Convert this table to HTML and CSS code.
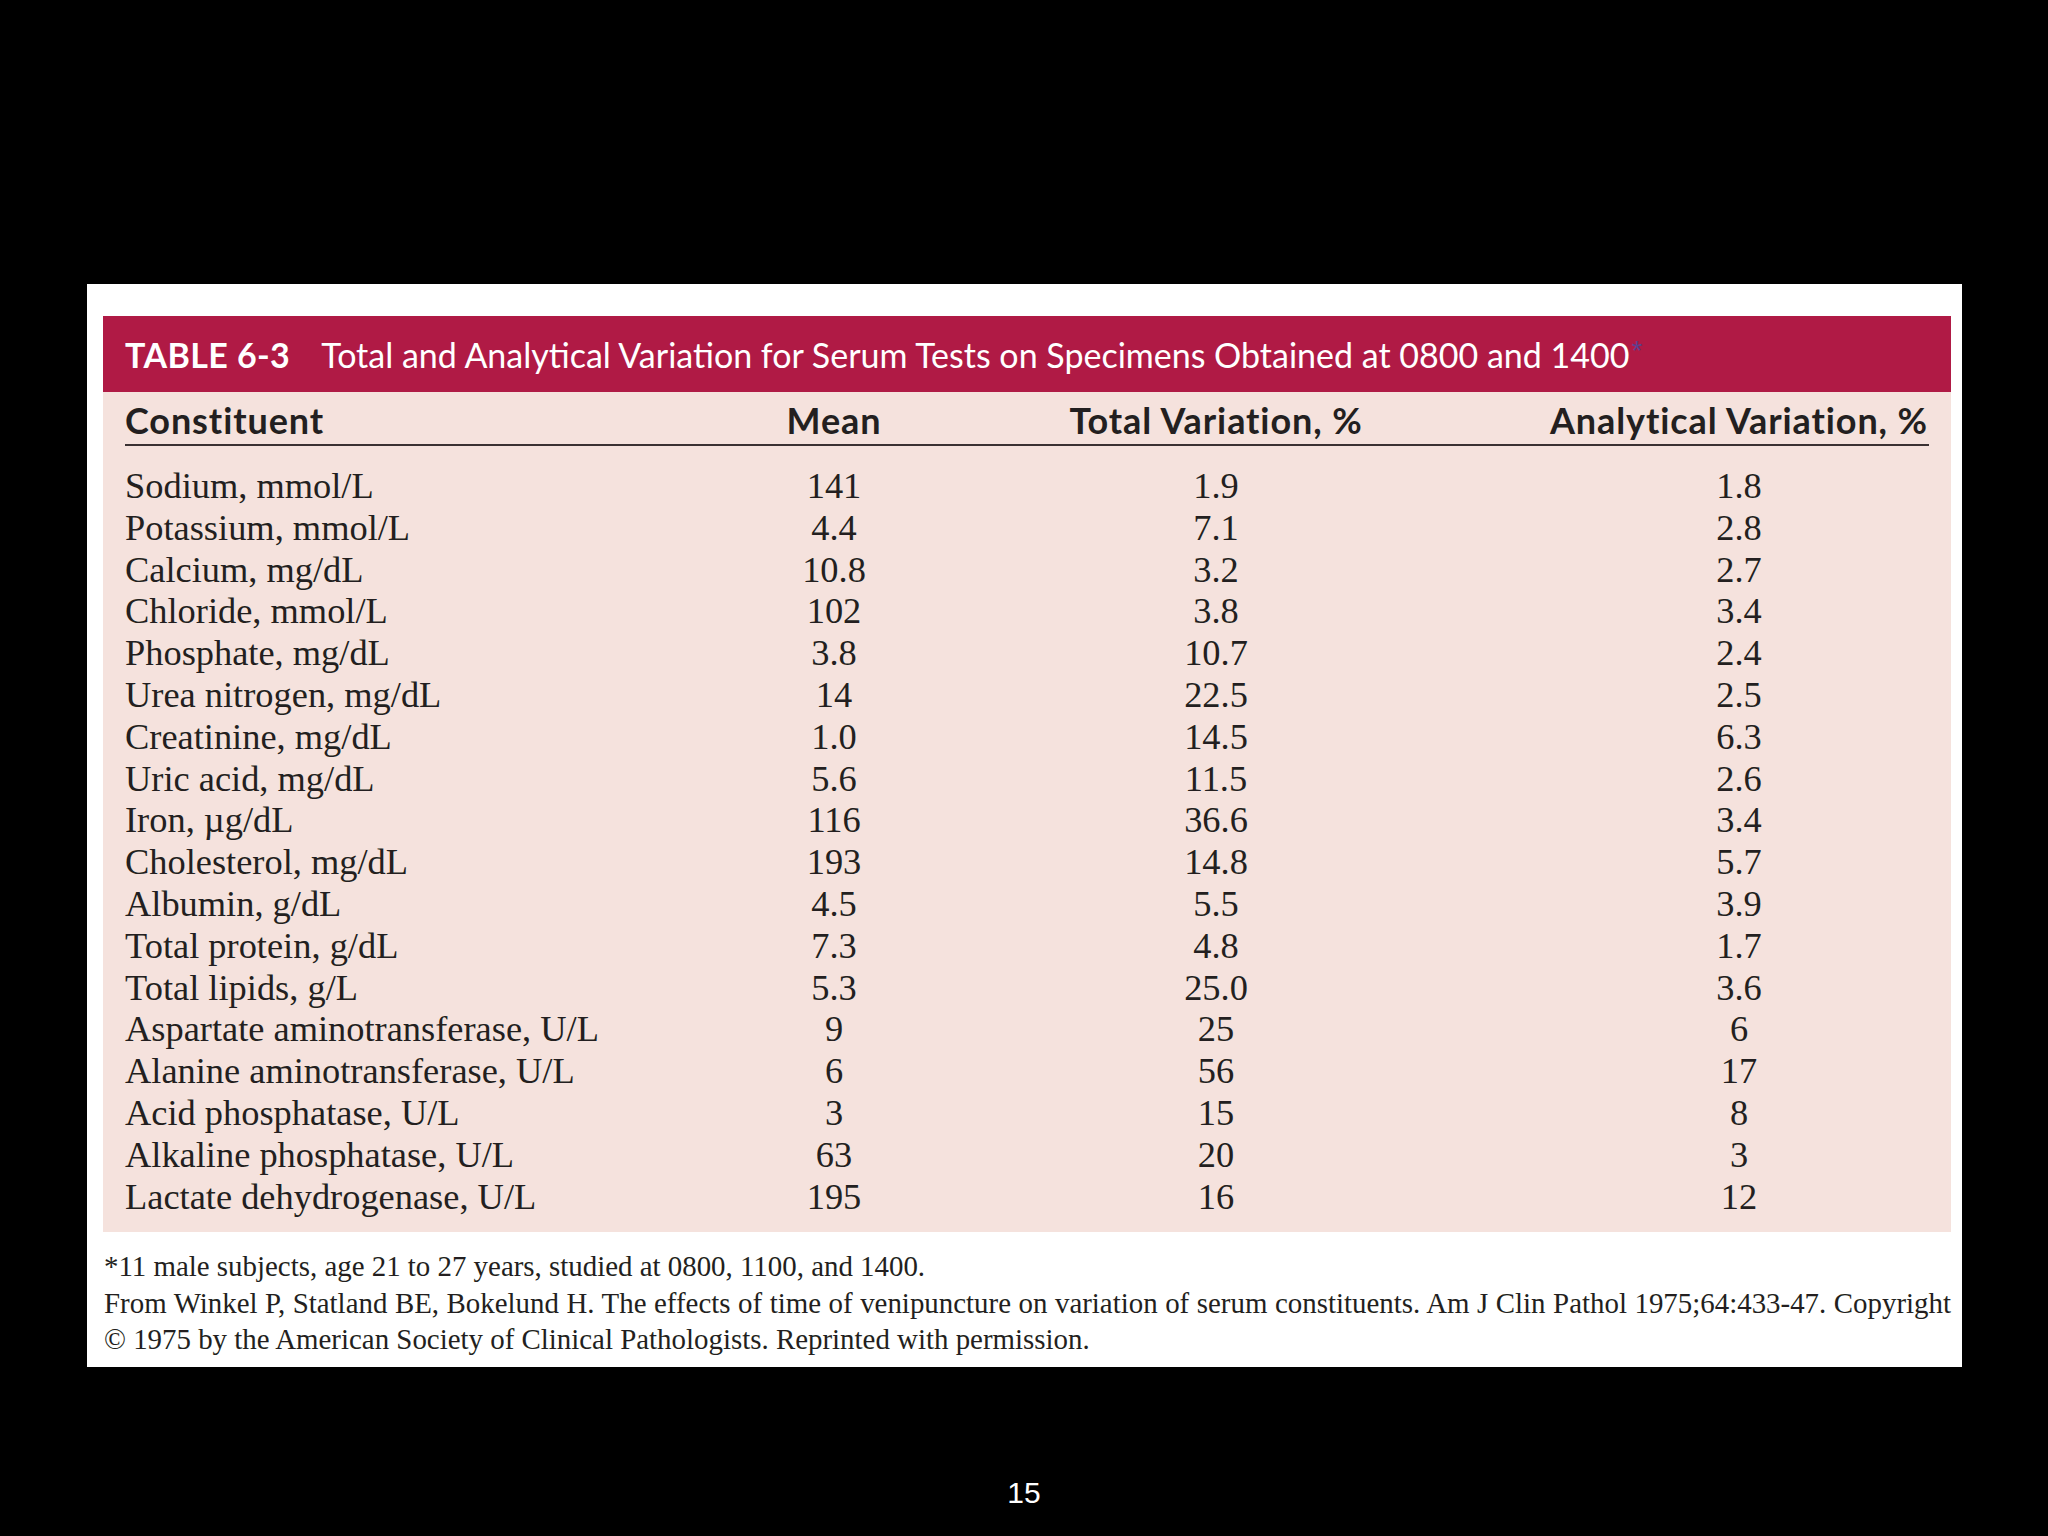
FILE: index.html
```html
<!DOCTYPE html>
<html lang="en">
<head>
<meta charset="utf-8">
<title>Table 6-3</title>
<link rel="stylesheet" href="styles.css">
</head>
<body>
<div class="slide">
  <div class="card">
    <div class="title-bar">
      <span class="title-label">TABLE 6-3</span>
      <span class="title-text">Total and Analytical Variation for Serum Tests on Specimens Obtained at 0800 and 1400<span class="title-star">*</span></span>
    </div>
    <div class="table">
      <div class="row head">
        <div class="c1">Constituent</div>
        <div class="c2">Mean</div>
        <div class="c3">Total Variation, %</div>
        <div class="c4">Analytical Variation, %</div>
      </div>
      <div class="body">
        <div class="row"><div class="c1">Sodium, mmol/L</div><div class="c2">141</div><div class="c3">1.9</div><div class="c4">1.8</div></div>
        <div class="row"><div class="c1">Potassium, mmol/L</div><div class="c2">4.4</div><div class="c3">7.1</div><div class="c4">2.8</div></div>
        <div class="row"><div class="c1">Calcium, mg/dL</div><div class="c2">10.8</div><div class="c3">3.2</div><div class="c4">2.7</div></div>
        <div class="row"><div class="c1">Chloride, mmol/L</div><div class="c2">102</div><div class="c3">3.8</div><div class="c4">3.4</div></div>
        <div class="row"><div class="c1">Phosphate, mg/dL</div><div class="c2">3.8</div><div class="c3">10.7</div><div class="c4">2.4</div></div>
        <div class="row"><div class="c1">Urea nitrogen, mg/dL</div><div class="c2">14</div><div class="c3">22.5</div><div class="c4">2.5</div></div>
        <div class="row"><div class="c1">Creatinine, mg/dL</div><div class="c2">1.0</div><div class="c3">14.5</div><div class="c4">6.3</div></div>
        <div class="row"><div class="c1">Uric acid, mg/dL</div><div class="c2">5.6</div><div class="c3">11.5</div><div class="c4">2.6</div></div>
        <div class="row"><div class="c1">Iron, µg/dL</div><div class="c2">116</div><div class="c3">36.6</div><div class="c4">3.4</div></div>
        <div class="row"><div class="c1">Cholesterol, mg/dL</div><div class="c2">193</div><div class="c3">14.8</div><div class="c4">5.7</div></div>
        <div class="row"><div class="c1">Albumin, g/dL</div><div class="c2">4.5</div><div class="c3">5.5</div><div class="c4">3.9</div></div>
        <div class="row"><div class="c1">Total protein, g/dL</div><div class="c2">7.3</div><div class="c3">4.8</div><div class="c4">1.7</div></div>
        <div class="row"><div class="c1">Total lipids, g/L</div><div class="c2">5.3</div><div class="c3">25.0</div><div class="c4">3.6</div></div>
        <div class="row"><div class="c1">Aspartate aminotransferase, U/L</div><div class="c2">9</div><div class="c3">25</div><div class="c4">6</div></div>
        <div class="row"><div class="c1">Alanine aminotransferase, U/L</div><div class="c2">6</div><div class="c3">56</div><div class="c4">17</div></div>
        <div class="row"><div class="c1">Acid phosphatase, U/L</div><div class="c2">3</div><div class="c3">15</div><div class="c4">8</div></div>
        <div class="row"><div class="c1">Alkaline phosphatase, U/L</div><div class="c2">63</div><div class="c3">20</div><div class="c4">3</div></div>
        <div class="row"><div class="c1">Lactate dehydrogenase, U/L</div><div class="c2">195</div><div class="c3">16</div><div class="c4">12</div></div>
      </div>
    </div>
    <div class="notes">
      <p class="note">*11 male subjects, age 21 to 27 years, studied at 0800, 1100, and 1400.</p>
      <p class="note justify">From Winkel P, Statland BE, Bokelund H. The effects of time of venipuncture on variation of serum constituents. Am J Clin Pathol 1975;64:433-47. Copyright</p>
      <p class="note">© 1975 by the American Society of Clinical Pathologists. Reprinted with permission.</p>
    </div>
  </div>
  <div class="page-num">15</div>
</div>
</body>
</html>
```

FILE: styles.css
```css
html, body {
  margin: 0;
  padding: 0;
  background: #000;
}

.slide {
  width: 2048px;
  height: 1536px;
  padding-top: 284px;
  box-sizing: border-box;
  overflow: hidden;
}

.card {
  margin-left: 87px;
  width: 1875px;
  height: 1083px;
  box-sizing: border-box;
  background: #fff;
  padding: 32px 11px 0 16px;
}

.title-bar {
  height: 76px;
  background: #b01a45;
  display: flex;
  align-items: center;
  padding-left: 22px;
  box-sizing: border-box;
  color: #fff;
  font-family: "Lato", "Open Sans", sans-serif;
  white-space: nowrap;
}

.title-label {
  font-weight: 700;
  font-size: 34px;
  letter-spacing: 0.4px;
  margin-right: 31px;
}

.title-text {
  font-weight: 400;
  font-size: 34px;
}

.title-star {
  font-family: "Liberation Sans", Arial, sans-serif;
  color: #5e3f8e;
  font-size: 28px;
  vertical-align: 8px;
  margin-left: 2px;
}

.table {
  background: #f5e2dd;
  padding: 8px 22px 14px 22px;
  color: #231f20;
}

.row {
  display: grid;
  grid-template-columns: 575px 268px 496px 465px;
}

.row > div {
  text-align: center;
  white-space: nowrap;
}

.row > .c1 {
  text-align: left;
}

.row > .c4 {
  padding-left: 85px;
}

.row.head {
  font-family: "Lato", "Open Sans", sans-serif;
  font-weight: 700;
  font-size: 36px;
  letter-spacing: 0.9px;
  line-height: 40px;
  padding-bottom: 4px;
  border-bottom: 2px solid #3a3132;
  margin-bottom: 20px;
}

.body .row {
  font-family: "Liberation Serif", "Times New Roman", serif;
  font-size: 36.4px;
  line-height: 41.8px;
}

.notes {
  margin-top: 16px;
  padding-left: 1px;
  color: #231f20;
  font-family: "Liberation Serif", "Times New Roman", serif;
  font-size: 28.9px;
  line-height: 36.5px;
}

.note {
  margin: 0;
  white-space: nowrap;
}

.note.justify {
  text-align: justify;
  text-align-last: justify;
  word-spacing: -1px;
}

.page-num {
  margin-top: 108px;
  text-align: center;
  color: #fff;
  font-family: "Liberation Sans", Arial, sans-serif;
  font-size: 30px;
  line-height: 36px;
}
```
